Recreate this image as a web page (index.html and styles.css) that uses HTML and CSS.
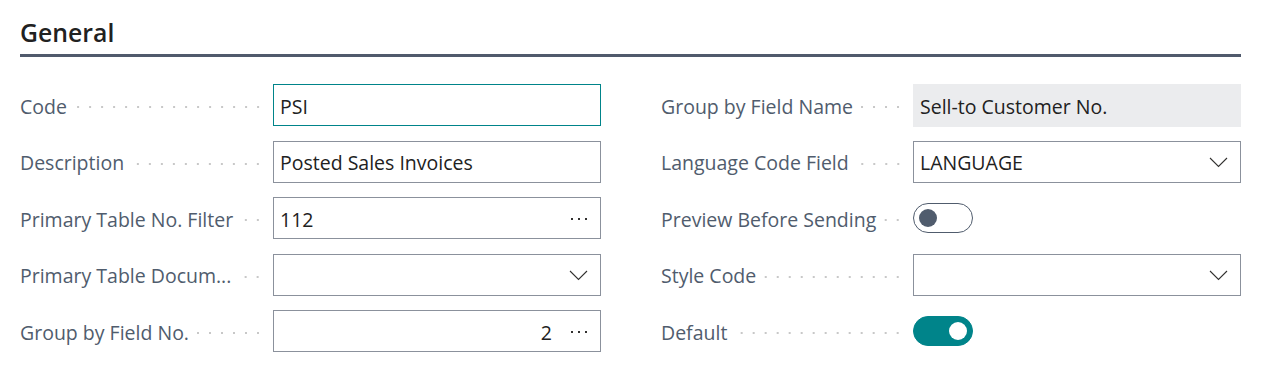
FILE: index.html
```html
<!DOCTYPE html>
<html lang="en">
<head>
  <meta charset="UTF-8">
  <meta name="viewport" content="width=device-width, initial-scale=1.0">
  <title>Report Selection - General</title>
  <link rel="stylesheet" href="styles.css">
</head>
<body>
  <div class="card">
    <h2 class="card-title">General</h2>
    <div class="columns">
      <!-- Left column -->
      <div class="column">
        <div class="field">
          <label class="caption"><span>Code</span><i class="leader"></i></label>
          <div class="control focused"><span class="value">PSI</span></div>
        </div>
        <div class="field">
          <label class="caption"><span>Description</span><i class="leader"></i></label>
          <div class="control"><span class="value">Posted Sales Invoices</span></div>
        </div>
        <div class="field">
          <label class="caption"><span>Primary Table No. Filter</span><i class="leader"></i></label>
          <div class="control"><span class="value">112</span><span class="more"><b></b><b></b><b></b></span></div>
        </div>
        <div class="field">
          <label class="caption"><span>Primary Table Docum...</span><i class="leader"></i></label>
          <div class="control"><span class="value"></span>
            <svg class="chevron" width="19" height="11" viewBox="0 0 19 11"><path d="M1 1 L9.5 9.5 L18 1" fill="none" stroke="#323130" stroke-width="1.1"/></svg>
          </div>
        </div>
        <div class="field">
          <label class="caption"><span>Group by Field No.</span><i class="leader"></i></label>
          <div class="control"><span class="value number">2</span><span class="more"><b></b><b></b><b></b></span></div>
        </div>
      </div>
      <!-- Right column -->
      <div class="column right">
        <div class="field">
          <label class="caption"><span>Group by Field Name</span><i class="leader"></i></label>
          <div class="control readonly"><span class="value">Sell-to Customer No.</span></div>
        </div>
        <div class="field">
          <label class="caption"><span>Language Code Field</span><i class="leader"></i></label>
          <div class="control"><span class="value">LANGUAGE</span>
            <svg class="chevron" width="19" height="11" viewBox="0 0 19 11"><path d="M1 1 L9.5 9.5 L18 1" fill="none" stroke="#323130" stroke-width="1.1"/></svg>
          </div>
        </div>
        <div class="field">
          <label class="caption"><span>Preview Before Sending</span><i class="leader"></i></label>
          <div class="toggle-cell"><span class="toggle"><span class="knob"></span></span></div>
        </div>
        <div class="field">
          <label class="caption"><span>Style Code</span><i class="leader"></i></label>
          <div class="control"><span class="value"></span>
            <svg class="chevron" width="19" height="11" viewBox="0 0 19 11"><path d="M1 1 L9.5 9.5 L18 1" fill="none" stroke="#323130" stroke-width="1.1"/></svg>
          </div>
        </div>
        <div class="field">
          <label class="caption"><span>Default</span><i class="leader"></i></label>
          <div class="toggle-cell"><span class="toggle on"><span class="knob"></span></span></div>
        </div>
      </div>
    </div>
  </div>
</body>
</html>
```

FILE: styles.css
```css
body {
  margin: 0;
  padding: 0;
  background-color: #ffffff;
  font-family: "Open Sans", "Noto Sans", Arial, sans-serif;
  color: #212121;
}
.card {
  width: 1221px;
  padding: 14px 0 0 20px;
}
.card-title {
  margin: 0;
  font-size: 24.8px;
  font-weight: 600;
  line-height: 36px;
  color: #212121;
  padding-bottom: 4px;
  border-bottom: 3px solid #505a6c;
}
.columns {
  display: grid;
  grid-template-columns: 581px 580px;
  column-gap: 60px;
  padding-top: 27px;
}
.column {
  display: flex;
  flex-direction: column;
  gap: 14.5px;
}
.field {
  display: flex;
  align-items: center;
  height: 42px;
}
/* caption with dotted leader */
.caption {
  width: 253px;
  display: flex;
  align-items: center;
  font-size: 19.5px;
  color: #505c6d;
  white-space: nowrap;
  padding-top: 2px;
}
.right .caption {
  width: 252px;
}
.leader {
  flex: 1;
  height: 4px;
  margin: 2px 9px 0 6px;
  background-image: radial-gradient(circle, #c8c8c8 1px, transparent 1.4px);
  background-size: 12px 4px;
  background-position: right center;
  background-repeat: repeat-x;
}
.control {
  box-sizing: border-box;
  width: 328px;
  height: 42px;
  border: 1px solid #8b919c;
  display: flex;
  align-items: center;
  padding: 2px 12px 0 6px;
  font-size: 19.5px;
  color: #212121;
}
.control.focused {
  border-color: #00848a;
}
.control.readonly {
  border-color: #ebecee;
  background-color: #ebecee;
  height: 43px;
}
.value {
  flex: 1;
}
.value.number {
  text-align: right;
  padding-right: 19px;
}
.more {
  display: flex;
  gap: 5px;
  padding-right: 1px;
}
.more b {
  width: 2px;
  height: 2px;
  background-color: #323130;
}
.chevron {
  display: block;
}
.toggle-cell {
  width: 328px;
  display: flex;
  align-items: center;
}
.toggle {
  box-sizing: border-box;
  width: 60px;
  height: 30px;
  border: 1px solid #505c6d;
  border-radius: 15px;
  display: flex;
  align-items: center;
  padding: 0 5px;
}
.knob {
  width: 18px;
  height: 18px;
  border-radius: 50%;
  background-color: #505c6d;
}
.toggle.on {
  background-color: #00848a;
  border-color: #00848a;
  justify-content: flex-end;
}
.toggle.on .knob {
  background-color: #ffffff;
}
```
